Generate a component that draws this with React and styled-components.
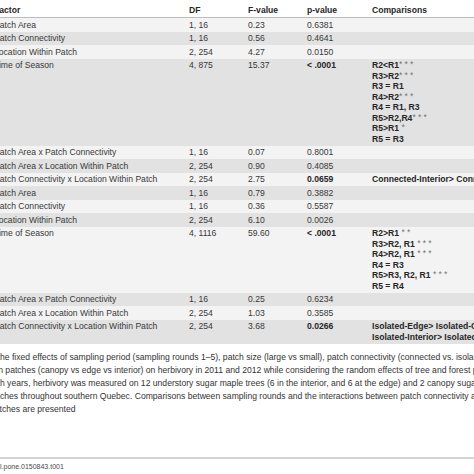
import React from 'react';
import styled, { createGlobalStyle } from 'styled-components';

const Global = createGlobalStyle`
  html, body { margin: 0; padding: 0; background: #ffffff; overflow: hidden; }
  body { font-family: "Liberation Sans", Arial, Helvetica, sans-serif; color: #333333; }
`;

const Page = styled.div`
  width: 474px;
  height: 474px;
  overflow: hidden;
  display: flex;
  flex-direction: column;
`;

const Table = styled.table`
  border-collapse: collapse;
  table-layout: fixed;
  width: 640px;
  margin-left: -12px;
  font-size: 8.6px;
  line-height: 10.5px;
`;

const HeadCell = styled.th`
  text-align: left;
  font-weight: 700;
  color: #262626;
  padding: 5px 0 1.5px 6px;
  border-bottom: 1px solid #bcbcbc;
  white-space: nowrap;
`;

const Row = styled.tr`
  background: ${(p) => (p.$shade ? '#e2e2e2' : '#f3f3f3')};
`;

const Cell = styled.td`
  vertical-align: top;
  padding: 1.5px 0 1.5px 6px;
  white-space: nowrap;
  font-weight: ${(p) => (p.$bold ? 700 : 400)};
  color: ${(p) => (p.$bold ? '#262626' : '#383838')};
  overflow: hidden;
`;

const CompLine = styled.div`
  font-weight: 700;
  color: #262626;
`;

const Stars = styled.span`
  font-size: 8.4px;
  font-weight: 400;
  color: #707070;
  letter-spacing: 2.3px;
  vertical-align: 1.5px;
  line-height: 0;
`;

const Footnote = styled.div`
  margin: 7px 0 0 -12px;
  font-size: 8.6px;
  line-height: 13.2px;
  color: #333333;
`;

const NoteLine = styled.div`
  white-space: nowrap;
  margin-left: ${(p) => p.$indent || 0}px;
`;

const Rule = styled.div`
  margin-top: 40px;
  height: 2px;
  background: #d3d3d3;
  flex-shrink: 0;
`;

const Doi = styled.div`
  margin: 3px 0 0 -58px;
  font-size: 7px;
  line-height: 9px;
  color: #4a4a4a;
  white-space: nowrap;
`;

const factorsA = ['Patch Area', 'Patch Connectivity', 'Location Within Patch', 'Time of Season'];
const factorsB = [
  'Patch Area x Patch Connectivity',
  'Patch Area x Location Within Patch',
  'Patch Connectivity x Location Within Patch',
];

const rows = [
  { f: factorsA[0], df: '1, 16', fv: '0.23', p: '0.6381' },
  { f: factorsA[1], df: '1, 16', fv: '0.56', p: '0.4641' },
  { f: factorsA[2], df: '2, 254', fv: '4.27', p: '0.0150' },
  {
    f: factorsA[3], df: '4, 875', fv: '15.37', p: '< .0001', pb: true,
    c: [
      ['R2<R1', '***'],
      ['R3>R2', '***'],
      ['R3 = R1'],
      ['R4>R2', '***'],
      ['R4 = R1, R3'],
      ['R5>R2,R4', '***'],
      ['R5>R1 ', '*'],
      ['R5 = R3'],
    ],
  },
  { f: factorsB[0], df: '1, 16', fv: '0.07', p: '0.8001' },
  { f: factorsB[1], df: '2, 254', fv: '0.90', p: '0.4085' },
  { f: factorsB[2], df: '2, 254', fv: '2.75', p: '0.0659', pb: true, c: [['Connected-Interior> Connected-Edge']] },
  { f: factorsA[0], df: '1, 16', fv: '0.79', p: '0.3882' },
  { f: factorsA[1], df: '1, 16', fv: '0.36', p: '0.5587' },
  { f: factorsA[2], df: '2, 254', fv: '6.10', p: '0.0026' },
  {
    f: factorsA[3], df: '4, 1116', fv: '59.60', p: '< .0001', pb: true,
    c: [
      ['R2>R1 ', '**'],
      ['R3>R2, R1 ', '***'],
      ['R4>R2, R1 ', '***'],
      ['R4 = R3'],
      ['R5>R3, R2, R1 ', '***'],
      ['R5 = R4'],
    ],
  },
  { f: factorsB[0], df: '1, 16', fv: '0.25', p: '0.6234' },
  { f: factorsB[1], df: '2, 254', fv: '1.03', p: '0.3585' },
  {
    f: factorsB[2], df: '2, 254', fv: '3.68', p: '0.0266', pb: true,
    c: [['Isolated-Edge> Isolated-Canopy'], ['Isolated-Interior> Isolated-Canopy']],
  },
];

const noteLines = [
  { t: 'of the fixed effects of sampling period (sampling rounds 1–5), patch size (large vs small), patch connectivity (connected vs. isolated) and location' },
  { t: 'within patches (canopy vs edge vs interior) on herbivory in 2011 and 2012 while considering the random effects of tree and forest patch. For', indent: -7 },
  { t: 'both years, herbivory was measured on 12 understory sugar maple trees (6 in the interior, and 6 at the edge) and 2 canopy sugar maple trees in 16' },
  { t: 'patches throughout southern Quebec. Comparisons between sampling rounds and the interactions between patch connectivity and location within' },
  { t: 'patches are presented', indent: 2 },
];

export default function App() {
  return (
    <>
      <Global />
      <Page>
        <Table>
          <colgroup>
            <col style={{ width: 195 }} />
            <col style={{ width: 59 }} />
            <col style={{ width: 59 }} />
            <col style={{ width: 65 }} />
            <col />
          </colgroup>
          <thead>
            <tr>
              <HeadCell>Factor</HeadCell>
              <HeadCell>DF</HeadCell>
              <HeadCell>F-value</HeadCell>
              <HeadCell>p-value</HeadCell>
              <HeadCell>Comparisons</HeadCell>
            </tr>
          </thead>
          <tbody>
            {rows.map((r, i) => (
              <Row key={i} $shade={i % 2 === 1}>
                <Cell>{r.f}</Cell>
                <Cell>{r.df}</Cell>
                <Cell>{r.fv}</Cell>
                <Cell $bold={r.pb}>{r.p}</Cell>
                <Cell>
                  {(r.c || []).map((l, j) => (
                    <CompLine key={j}>
                      {l[0]}
                      {l[1] && <Stars>{l[1]}</Stars>}
                    </CompLine>
                  ))}
                </Cell>
              </Row>
            ))}
          </tbody>
        </Table>
        <Footnote>
          {noteLines.map((l, i) => (
            <NoteLine key={i} $indent={l.indent}>{l.t}</NoteLine>
          ))}
        </Footnote>
        <Rule />
        <Doi>doi:10.1371/journal.pone.0150843.t001</Doi>
      </Page>
    </>
  );
}
